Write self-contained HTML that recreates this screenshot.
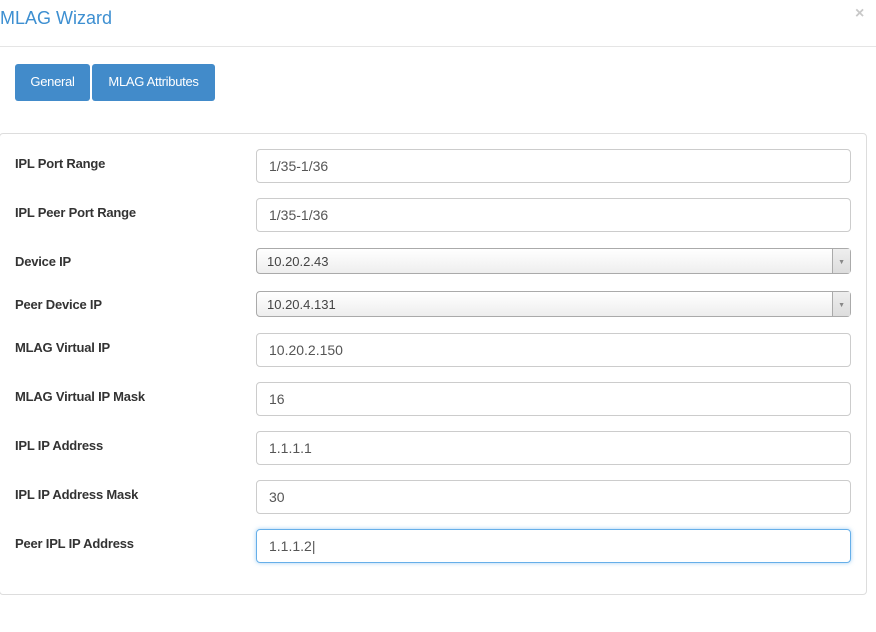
<!DOCTYPE html>
<html><head><style>
body{margin:0;width:876px;height:632px;background:#fff;font-family:"Liberation Sans",Arial,sans-serif;position:relative;overflow:hidden}
.t{position:absolute;left:0;top:8px;font-size:18px;color:#3d8fd1}
.x{position:absolute;left:855px;top:5px;font-size:16px;color:#c8c8c8;font-weight:bold}
.hr{position:absolute;left:0;top:46px;width:876px;height:1px;background:#e5e5e5}
.b{position:absolute;top:64px;height:37px;background:#428bca;border-radius:3px;color:#fff;font-size:13px;line-height:36px;text-align:center;letter-spacing:-0.3px}
.p{position:absolute;left:-1px;top:133px;width:866px;height:460px;border:1px solid #ddd;border-radius:4px}
.l{position:absolute;left:15px;font-size:13px;font-weight:bold;color:#333;letter-spacing:-0.2px}
.i{position:absolute;left:256px;width:593px;height:32px;border:1px solid #ccc;border-radius:4px;font-size:14px;color:#555;line-height:32px;box-sizing:content-box;text-indent:12px}
.s{position:absolute;left:256px;width:593px;height:24px;border:1px solid #aaa;border-radius:4px;background:linear-gradient(#fff,#eee);font-size:13px;color:#444;line-height:25px;text-indent:10px}
.s:after{content:"";position:absolute;right:0;top:0;width:17px;height:24px;border-left:1px solid #aaa;background:linear-gradient(#eee,#ddd)}
.s span{position:absolute;right:5px;top:1px;font-size:7px;color:#888;text-indent:0;z-index:1}
</style></head><body>
<div class="t">MLAG Wizard</div><div class="x">×</div>
<div class="hr"></div>
<div class="b" style="left:15px;width:75px">General</div>
<div class="b" style="left:92px;width:123px">MLAG Attributes</div>
<div class="p"></div>
<div class="l" style="top:156px">IPL Port Range</div><div class="i" style="top:149px">1/35-1/36</div>
<div class="l" style="top:205px">IPL Peer Port Range</div><div class="i" style="top:198px">1/35-1/36</div>
<div class="l" style="top:254px">Device IP</div><div class="s" style="top:248px">10.20.2.43<span>▼</span></div>
<div class="l" style="top:297px">Peer Device IP</div><div class="s" style="top:291px">10.20.4.131<span>▼</span></div>
<div class="l" style="top:340px">MLAG Virtual IP</div><div class="i" style="top:333px">10.20.2.150</div>
<div class="l" style="top:389px">MLAG Virtual IP Mask</div><div class="i" style="top:382px">16</div>
<div class="l" style="top:438px">IPL IP Address</div><div class="i" style="top:431px">1.1.1.1</div>
<div class="l" style="top:487px">IPL IP Address Mask</div><div class="i" style="top:480px">30</div>
<div class="l" style="top:536px">Peer IPL IP Address</div><div class="i" style="top:529px;border-color:#66afe9;box-shadow:0 0 4px rgba(102,175,233,.6)">1.1.1.2|</div>
</body></html>
